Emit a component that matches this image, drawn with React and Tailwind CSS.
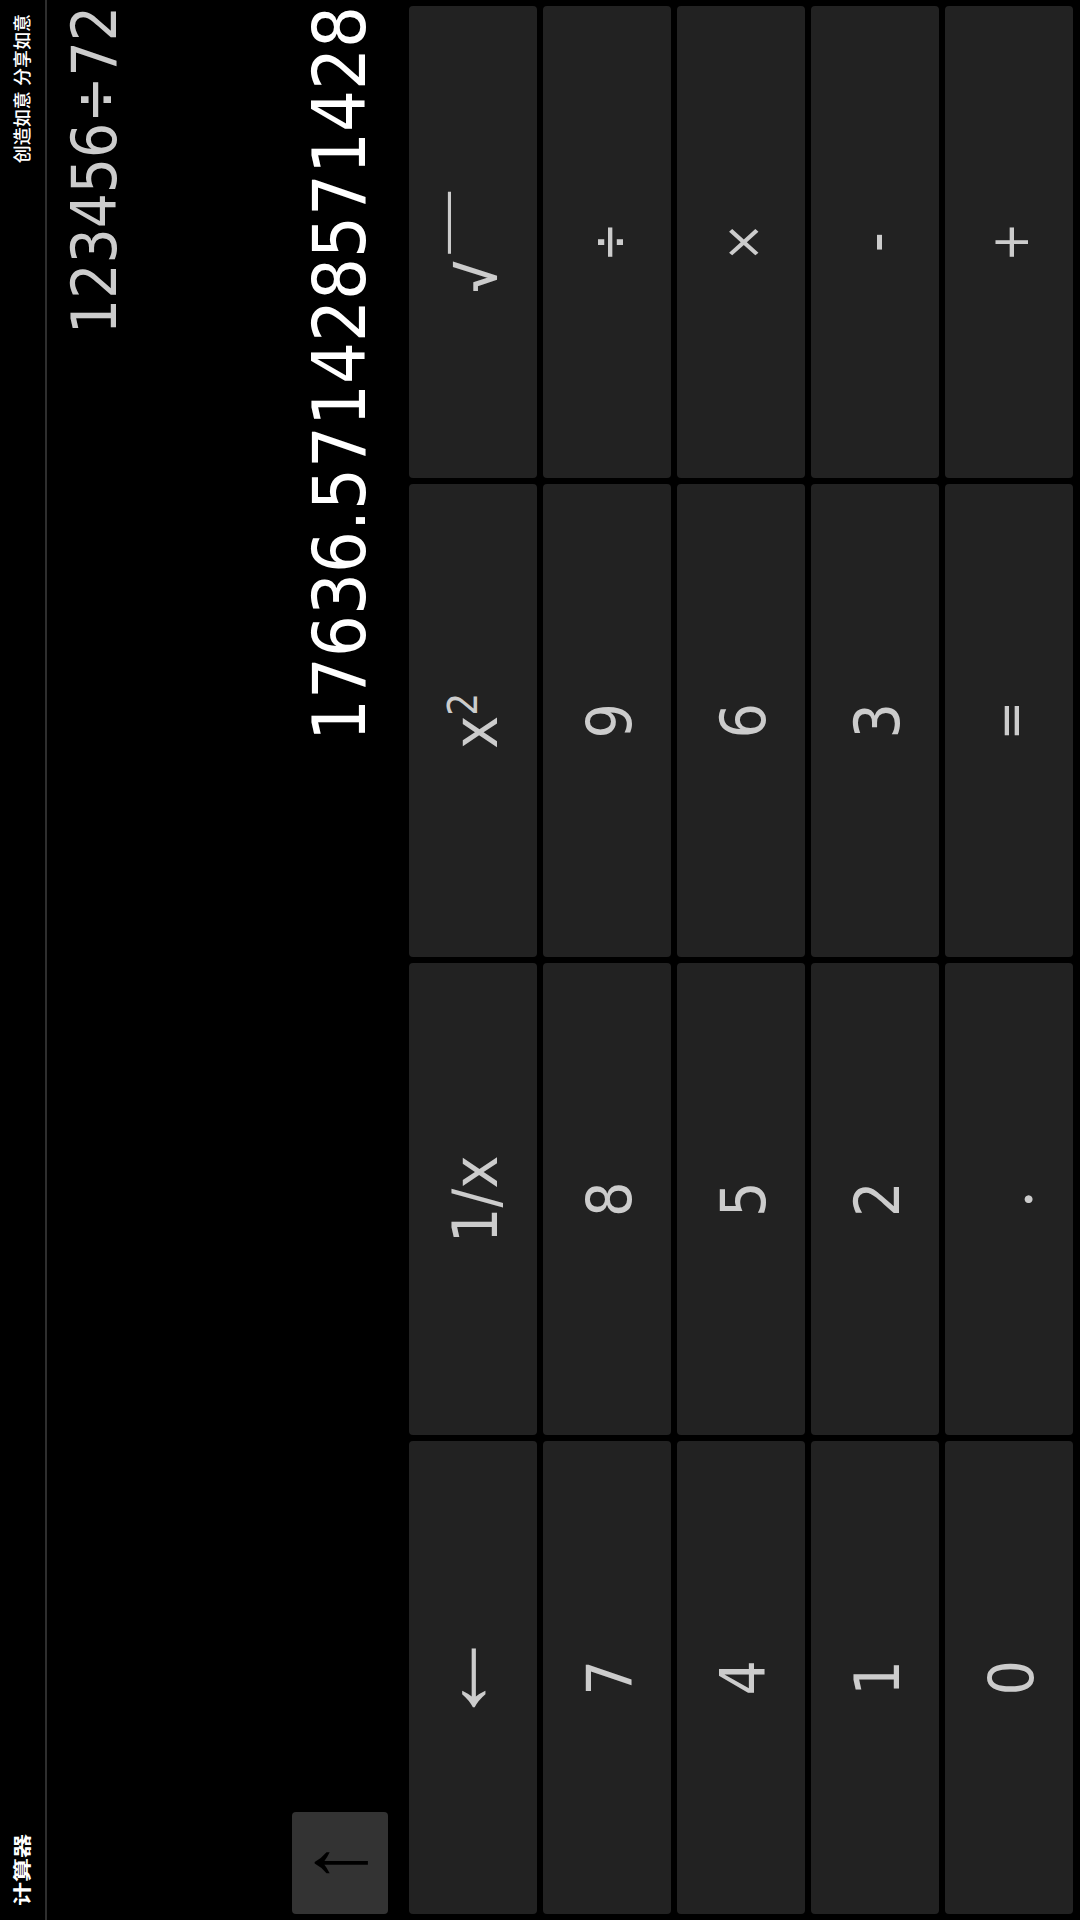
const base = "font-['DejaVu_Sans','Noto_Sans_CJK_SC',sans-serif]";

const keys = [
    "←", "1/x", "x2", "√",
    "7", "8", "9", "÷",
    "4", "5", "6", "×",
    "1", "2", "3", "-",
    "0", ".", "=", "+",
];

const smallOps = ["÷", "×", "=", "+"];

function KeyLabel({ label }) {
    if (label === "x2") {
        return (
            <span>
                x<sup className="text-[40px] leading-none">2</sup>
            </span>
        );
    }
    if (label === "√") {
        return (
            <span className="flex items-start font-['Roboto',sans-serif]">
                <span>√</span>
                <span className="ml-[6px] font-['Noto_Sans_CJK_SC',sans-serif] font-black">￣</span>
            </span>
        );
    }
    if (label === "←") {
        return <span className="-translate-y-[20px] font-['Liberation_Sans',sans-serif] text-[99px]">←</span>;
    }
    if (label === ".") {
        return <span className="-mt-[8px] font-['Lato',sans-serif]">.</span>;
    }
    if (label === "-") {
        return <span className="-mt-[4px]">-</span>;
    }
    if (smallOps.includes(label)) {
        return <span className="-mt-[4px] text-[52px]">{label}</span>;
    }
    return label;
}

function Key({ label }) {
    return (
        <button className="flex items-center justify-center rounded-[4px] bg-[#222222] pt-[5px] text-[62px] leading-none text-[#cccccc]">
            <KeyLabel label={label} />
        </button>
    );
}

export default function App() {
    return (
        <div className="h-[1920px] w-[1080px] overflow-hidden bg-black">
            {/* the whole app is a landscape page turned on its side */}
            <div className={`flex h-[1080px] w-[1920px] origin-top-left translate-y-[1920px] -rotate-90 flex-col bg-black font-stretch-semi-condensed ${base}`}>
                <div className="flex h-[47px] shrink-0 items-center justify-between border-b-2 border-[#2e2e2e] px-[14px] text-white">
                    <span className="origin-left scale-y-75 text-[24px] font-bold leading-none">计算器</span>
                    <span className="text-[18px] font-medium leading-none">创造如意 分享如意</span>
                </div>

                <div className="flex h-[362px] shrink-0 flex-col justify-between pb-[21px] pl-[6px] pr-[6px] pt-[12px]">
                    <div className="text-right text-[61.5px] leading-[72px] text-[#cccccc]">123456÷72</div>
                    <div className="flex items-center justify-between">
                        <button className="flex h-[96px] w-[102px] items-center justify-center rounded-[4px] bg-[#333333] text-black">
                            <span className="-translate-y-[6px] font-['Liberation_Sans',sans-serif] text-[90px] leading-none">↑</span>
                        </button>
                        <div className="text-[73.4px] leading-[96px] text-white">17636.571428571428</div>
                    </div>
                </div>

                <div className="grid flex-1 grid-cols-4 grid-rows-5 gap-[6px] px-[6px] pb-[7px]">
                    {keys.map((label, i) => (
                        <Key key={i} label={label} />
                    ))}
                </div>
            </div>
        </div>
    );
}
